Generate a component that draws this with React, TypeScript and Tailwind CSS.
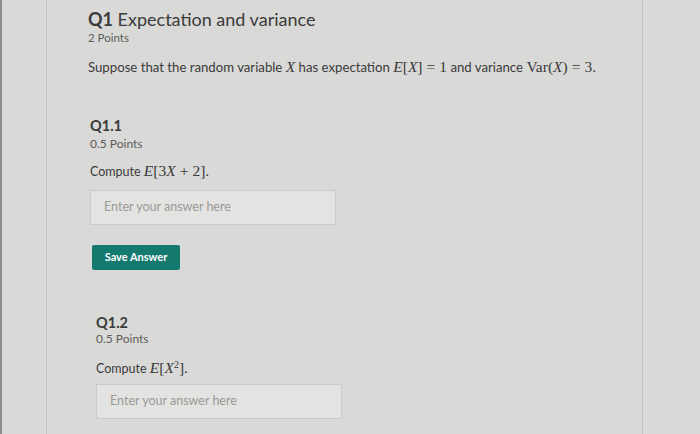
import React from "react";

const sans = "font-['Lato','Open_Sans',sans-serif]";
const math = "font-['Liberation_Serif','DejaVu_Serif',serif]";

const Op = ({ children }: { children: React.ReactNode }) => (
  <span className="px-[4px]">{children}</span>
);

const Input = ({ top }: { top: string }) => (
  <div className={`${top} w-[246px] h-[35px] bg-[#e3e3e1] border border-[#cacac8] flex items-center pl-[13px] text-[12.5px] text-[#9a9a98]`}>
    Enter your answer here
  </div>
);

export default function App() {
  return (
    <div className={`w-[700px] h-[434px] bg-[#d9d9d7] overflow-hidden flex ${sans}`}>
      <div className="w-[47px] border-l-2 border-[#8c8c8a] border-r border-r-[#c4c4c2] shrink-0" />
      <div className="w-[596px] border-r border-[#c4c4c2] pl-[41px] pt-[8px] text-[#3b3b3b]">
        {/* Question header */}
        <h1 className="text-[18px] leading-[22px]">
          <span className="font-bold">Q1</span> Expectation and variance
        </h1>
        <div className="text-[11.5px] leading-[14px] text-[#5d5d5b] mt-[1px]">2 Points</div>
        <p className="text-[13.2px] leading-[16px] mt-[14px]">
          Suppose that the random variable{" "}
          <span className={`${math} text-[15.5px] italic`}>X</span> has expectation{" "}
          <span className={`${math} text-[15.5px]`}>
            <i>E</i>[<i>X</i>]<Op>=</Op>1
          </span>{" "}
          and variance{" "}
          <span className={`${math} text-[15.5px]`}>
            Var(<i>X</i>)<Op>=</Op>3.
          </span>
        </p>

        {/* Q1.1 */}
        <div className="ml-[2px] mt-[42px]">
          <h2 className="text-[14.5px] leading-[18px] font-bold">Q1.1</h2>
          <div className="text-[12px] leading-[14px] text-[#5d5d5b] mt-[2px]">0.5 Points</div>
          <p className="text-[12.5px] leading-[16px] mt-[12px]">
            Compute{" "}
            <span className={`${math} text-[15.5px]`}>
              <i>E</i>[3<i>X</i>
              <Op>+</Op>2].
            </span>
          </p>
          <Input top="mt-[10px]" />
          <button className="mt-[20px] ml-[2px] w-[88px] h-[25px] bg-[#147a6f] text-white text-[11px] font-bold rounded-[2px]">
            Save Answer
          </button>
        </div>

        {/* Q1.2 */}
        <div className="ml-[8px] mt-[44px]">
          <h2 className="text-[14.5px] leading-[18px] font-bold">Q1.2</h2>
          <div className="text-[12px] leading-[14px] text-[#5d5d5b] mt-[0px]">0.5 Points</div>
          <p className="text-[12.5px] leading-[16px] mt-[14px]">
            Compute{" "}
            <span className={`${math} text-[15.5px]`}>
              <i>E</i>[<i>X</i>
              <sup className="text-[10px]">2</sup>].
            </span>
          </p>
          <Input top="mt-[7px]" />
        </div>
      </div>
    </div>
  );
}
